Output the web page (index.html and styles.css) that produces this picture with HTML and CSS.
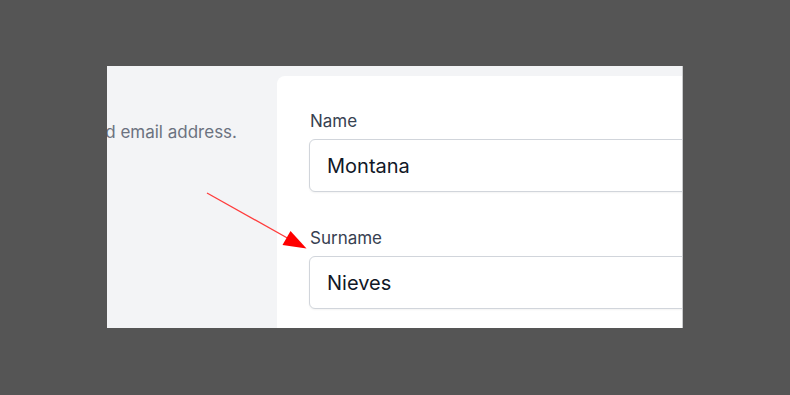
FILE: index.html
```html
<!DOCTYPE html>
<html lang="en">
<head>
    <meta charset="UTF-8">
    <meta name="viewport" content="width=device-width, initial-scale=1.0">
    <title>Profile Information</title>
    <link rel="stylesheet" href="styles.css">
</head>
<body>
    <div class="shot">
        <div class="section-info">
            <p>and email address.</p>
        </div>
        <form class="profile-card">
            <div class="form-group">
                <label for="name">Name</label>
                <input type="text" id="name" value="Montana">
            </div>
            <div class="form-group">
                <label for="surname">Surname</label>
                <input type="text" id="surname" value="Nieves">
            </div>
        </form>
    </div>

    <svg class="annotation" width="790" height="395" viewBox="0 0 790 395">
        <line x1="207" y1="193" x2="290" y2="239.5" stroke="#ff3b3b" stroke-width="1.3"/>
        <polygon points="306.5,248.5 282.5,245 290.5,231" fill="#ff0000"/>
    </svg>
</body>
</html>
```

FILE: styles.css
```css
* {
    margin: 0;
    padding: 0;
    box-sizing: border-box;
    font-family: Inter, "Noto Sans", sans-serif;
}

body {
    background: #555555;
    padding: 66px 0 0 107px;
    min-height: 100vh;
}

.shot {
    width: 576px;
    height: 262px;
    overflow: hidden;
    display: flex;
    background: #f3f4f6;
    border-right: 1px solid #c9cacc;
}

.section-info {
    flex: none;
    width: 170px;
    display: flex;
    justify-content: flex-end;
    padding-right: 40px;
    padding-top: 54px;
}

.section-info p {
    white-space: nowrap;
    color: #6b7280;
    font-size: 17px;
    line-height: 24px;
}

.profile-card {
    flex: none;
    width: 520px;
    margin-top: 10px;
    background: #ffffff;
    border-radius: 8px 0 0 0;
    padding: 33px 32px 0 32px;
    display: flex;
    flex-direction: column;
    gap: 34px;
}

.form-group {
    display: flex;
    flex-direction: column;
    gap: 6px;
}

.form-group label {
    color: #374151;
    font-size: 17px;
    line-height: 24px;
    padding-left: 1px;
}

.form-group input {
    width: 100%;
    height: 53px;
    padding: 0 17px;
    border: 1px solid #d1d5db;
    border-radius: 6px;
    box-shadow: 0 1px 2px rgba(0, 0, 0, 0.05);
    font-size: 20px;
    color: #111827;
    outline: none;
}

.annotation {
    position: absolute;
    left: 0;
    top: 0;
    pointer-events: none;
}
```
